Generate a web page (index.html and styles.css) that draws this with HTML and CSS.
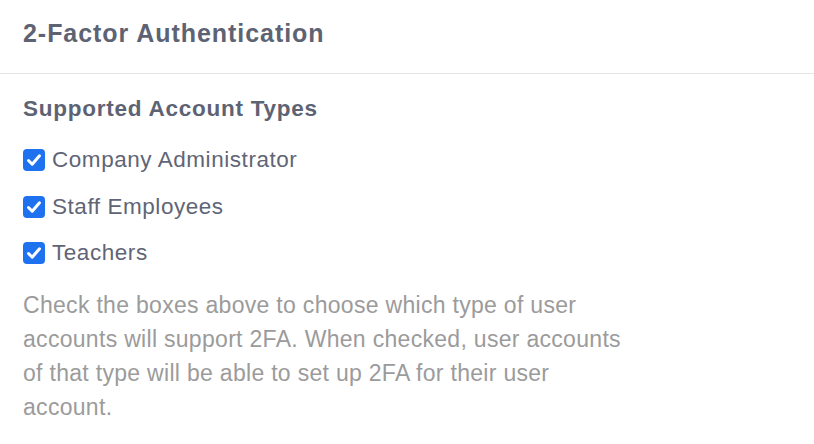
FILE: index.html
```html
<!DOCTYPE html>
<html lang="en">
<head>
<meta charset="utf-8">
<title>2-Factor Authentication</title>
<link rel="stylesheet" href="styles.css">
</head>
<body>
<div class="panel">
  <div class="header">
    <h1 class="title">2-Factor Authentication</h1>
  </div>
  <div class="content">
    <h2 class="subtitle">Supported Account Types</h2>
    <ul class="options">
      <li class="option">
        <span class="box"><svg viewBox="0 0 22 22" width="22" height="22"><path d="M5.5 11.5 L9.2 15.2 L16.5 6.8" fill="none" stroke="#fff" stroke-width="3" stroke-linecap="round" stroke-linejoin="round"/></svg></span>
        <span class="label">Company Administrator</span>
      </li>
      <li class="option">
        <span class="box"><svg viewBox="0 0 22 22" width="22" height="22"><path d="M5.5 11.5 L9.2 15.2 L16.5 6.8" fill="none" stroke="#fff" stroke-width="3" stroke-linecap="round" stroke-linejoin="round"/></svg></span>
        <span class="label">Staff Employees</span>
      </li>
      <li class="option">
        <span class="box"><svg viewBox="0 0 22 22" width="22" height="22"><path d="M5.5 11.5 L9.2 15.2 L16.5 6.8" fill="none" stroke="#fff" stroke-width="3" stroke-linecap="round" stroke-linejoin="round"/></svg></span>
        <span class="label">Teachers</span>
      </li>
    </ul>
    <p class="help">Check the boxes above to choose which type of user accounts will support 2FA. When checked, user accounts of that type will be able to set up 2FA for their user account.</p>
  </div>
</div>
</body>
</html>
```
FILE: styles.css
```css
html, body {
  margin: 0;
  padding: 0;
  background: #ffffff;
}
body {
  font-family: "Liberation Sans", Arial, Helvetica, sans-serif;
}
.header {
  box-sizing: border-box;
  height: 74px;
  padding: 18px 23px 0;
  border-bottom: 1px solid #e5e5e7;
}
.title {
  margin: 0;
  font-size: 25px;
  line-height: 30px;
  font-weight: 700;
  letter-spacing: 0.95px;
  color: #5d6373;
}
.content {
  padding: 0 23px;
}
.subtitle {
  margin: 21px 0 0;
  font-size: 22.5px;
  line-height: 28px;
  font-weight: 700;
  letter-spacing: 0.75px;
  color: #5d6373;
}
.options {
  list-style: none;
  margin: 14px 0 0;
  padding: 0;
  display: flex;
  flex-direction: column;
}
.option {
  height: 46.5px;
  display: flex;
  align-items: center;
  gap: 7px;
}
.box {
  width: 22px;
  height: 22px;
  border-radius: 4px;
  background: #1f72ef;
  display: flex;
}
.label {
  font-size: 22.5px;
  letter-spacing: 0.55px;
  color: #5f6576;
}
.help {
  margin: 11px 0 0;
  max-width: 615px;
  font-size: 23px;
  line-height: 34px;
  letter-spacing: 0.3px;
  color: #9b9b9b;
}
```
